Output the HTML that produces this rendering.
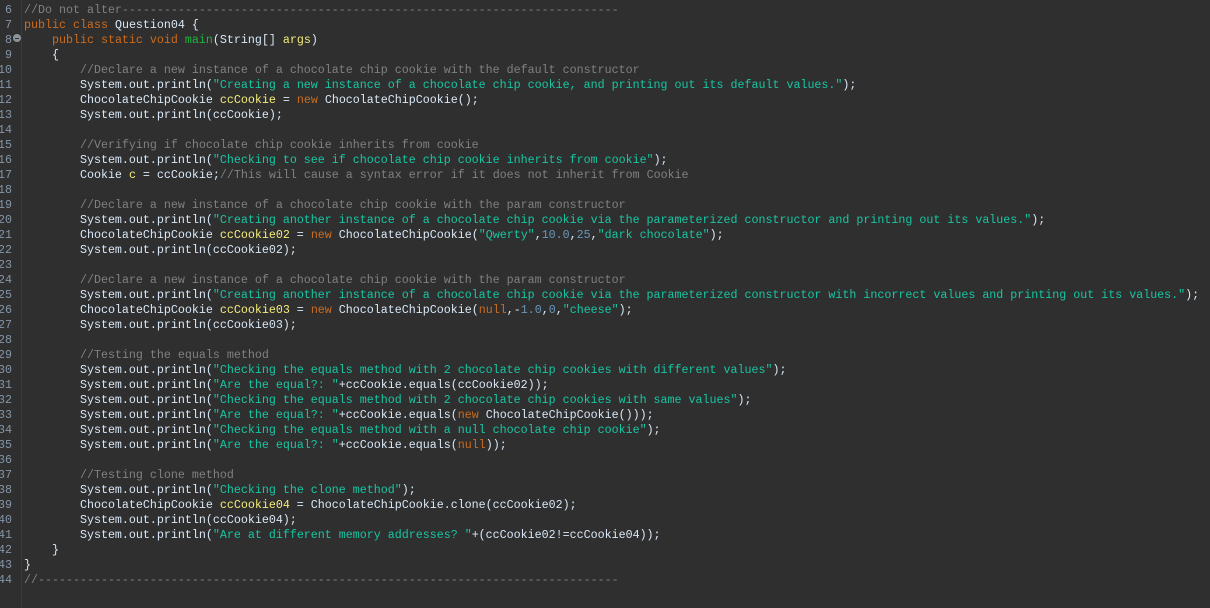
<!DOCTYPE html>
<html><head><meta charset="utf-8"><style>
html,body{margin:0;padding:0;background:#2f2f2f;width:1210px;height:608px;overflow:hidden}
.g{position:absolute;left:0;top:0;width:21px;height:608px;background:#2f2f2f;border-right:1px solid #3a3a3a;overflow:hidden}
.ln{position:absolute;left:-3px;top:3px;width:15px;text-align:right;font:11.67px/15px "Liberation Mono",monospace;color:#8496a8;white-space:pre}
pre{position:absolute;left:24px;top:3px;margin:0;font:11.67px/15px "Liberation Mono",monospace;color:#d9e8f7;white-space:pre}
.c{color:#808080}.k{color:#cc6c1d}.s{color:#17c6a3}.v{color:#f3ec79}.n{color:#6897bb}.m{color:#1eb540}
.fold{position:absolute;left:13px;top:34px;width:8px;height:8px;border-radius:50%;background:#8a949c}
.fold:after{content:"";position:absolute;left:2px;top:3.5px;width:4px;height:1px;background:#2f2f2f}
</style></head><body>
<div class="g"><div class="ln">6
7
8
9
10
11
12
13
14
15
16
17
18
19
20
21
22
23
24
25
26
27
28
29
30
31
32
33
34
35
36
37
38
39
40
41
42
43
44</div></div>
<div class="fold"></div>
<pre><span class="c">//Do not alter-----------------------------------------------------------------------</span>
<span class="k">public class</span> Question04 {
    <span class="k">public static void</span> <span class="m">main</span>(String[] <span class="v">args</span>)
    {
        <span class="c">//Declare a new instance of a chocolate chip cookie with the default constructor</span>
        System.out.println(<span class="s">"Creating a new instance of a chocolate chip cookie, and printing out its default values."</span>);
        ChocolateChipCookie <span class="v">ccCookie</span> = <span class="k">new</span> ChocolateChipCookie();
        System.out.println(ccCookie);

        <span class="c">//Verifying if chocolate chip cookie inherits from cookie</span>
        System.out.println(<span class="s">"Checking to see if chocolate chip cookie inherits from cookie"</span>);
        Cookie <span class="v">c</span> = ccCookie;<span class="c">//This will cause a syntax error if it does not inherit from Cookie</span>

        <span class="c">//Declare a new instance of a chocolate chip cookie with the param constructor</span>
        System.out.println(<span class="s">"Creating another instance of a chocolate chip cookie via the parameterized constructor and printing out its values."</span>);
        ChocolateChipCookie <span class="v">ccCookie02</span> = <span class="k">new</span> ChocolateChipCookie(<span class="s">"Qwerty"</span>,<span class="n">10.0</span>,<span class="n">25</span>,<span class="s">"dark chocolate"</span>);
        System.out.println(ccCookie02);

        <span class="c">//Declare a new instance of a chocolate chip cookie with the param constructor</span>
        System.out.println(<span class="s">"Creating another instance of a chocolate chip cookie via the parameterized constructor with incorrect values and printing out its values."</span>);
        ChocolateChipCookie <span class="v">ccCookie03</span> = <span class="k">new</span> ChocolateChipCookie(<span class="k">null</span>,-<span class="n">1.0</span>,<span class="n">0</span>,<span class="s">"cheese"</span>);
        System.out.println(ccCookie03);

        <span class="c">//Testing the equals method</span>
        System.out.println(<span class="s">"Checking the equals method with 2 chocolate chip cookies with different values"</span>);
        System.out.println(<span class="s">"Are the equal?: "</span>+ccCookie.equals(ccCookie02));
        System.out.println(<span class="s">"Checking the equals method with 2 chocolate chip cookies with same values"</span>);
        System.out.println(<span class="s">"Are the equal?: "</span>+ccCookie.equals(<span class="k">new</span> ChocolateChipCookie()));
        System.out.println(<span class="s">"Checking the equals method with a null chocolate chip cookie"</span>);
        System.out.println(<span class="s">"Are the equal?: "</span>+ccCookie.equals(<span class="k">null</span>));

        <span class="c">//Testing clone method</span>
        System.out.println(<span class="s">"Checking the clone method"</span>);
        ChocolateChipCookie <span class="v">ccCookie04</span> = ChocolateChipCookie.clone(ccCookie02);
        System.out.println(ccCookie04);
        System.out.println(<span class="s">"Are at different memory addresses? "</span>+(ccCookie02!=ccCookie04));
    }
}
<span class="c">//-----------------------------------------------------------------------------------</span></pre>
</body></html>
